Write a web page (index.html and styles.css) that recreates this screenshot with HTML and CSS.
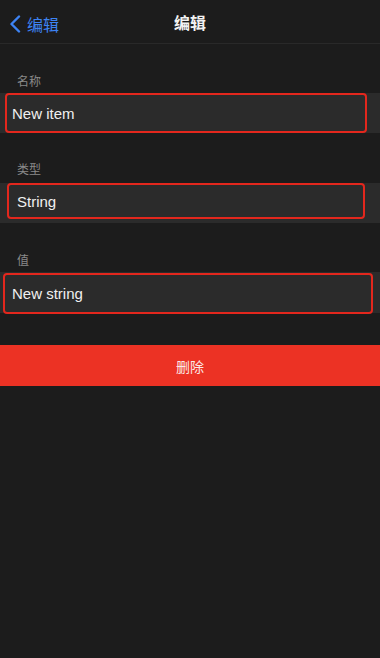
FILE: index.html
```html
<!DOCTYPE html>
<html lang="zh">
<head>
<meta charset="UTF-8">
<meta name="viewport" content="width=device-width, initial-scale=1.0">
<title>编辑</title>
<link rel="stylesheet" href="styles.css">
</head>
<body>
<div id="page">
    <header class="nav-bar">
        <a class="back">
            <svg width="12" height="18" viewBox="0 0 12 18"><path d="M10 1.5 L2.5 9 L10 16.5" fill="none" stroke="#3d83f3" stroke-width="2.4" stroke-linecap="round" stroke-linejoin="round"/></svg>
            <span>编辑</span>
        </a>
        <h1 class="title">编辑</h1>
    </header>

    <section class="group group-name">
        <div class="label">名称</div>
        <div class="row">
            <div class="mark mark-name">New item</div>
        </div>
    </section>

    <section class="group group-type">
        <div class="label">类型</div>
        <div class="row">
            <div class="mark mark-type">String</div>
        </div>
    </section>

    <section class="group group-value">
        <div class="label">值</div>
        <div class="row row-value">
            <div class="mark mark-value">New string</div>
        </div>
    </section>

    <button class="delete">删除</button>
</div>
</body>
</html>
```

FILE: styles.css
```css
html, body {
    margin: 0;
    padding: 0;
    background: #1c1c1c;
}
#page {
    width: 380px;
    min-height: 658px;
    font-family: "Liberation Sans", "Noto Sans CJK SC", sans-serif;
    color: #fff;
}
.nav-bar {
    height: 43px;
    border-bottom: 1px solid #292929;
    display: flex;
    align-items: center;
    justify-content: center;
    position: relative;
}
.back {
    position: absolute;
    left: 9px;
    top: 12px;
    display: flex;
    align-items: center;
    gap: 6px;
    color: #3d83f3;
    font-size: 16px;
}
.back svg {
    display: block;
}
.title {
    margin: 0;
    font-size: 16px;
    font-weight: bold;
    color: #f2f2f2;
}
.group {
    display: flex;
    flex-direction: column;
}
.label {
    padding-left: 17px;
    font-size: 12px;
    line-height: 16px;
    color: #8a8a8a;
    margin-bottom: 3px;
}
.group-name {
    padding-top: 30px;
}
.group-type {
    padding-top: 29px;
}
.group-value {
    padding-top: 30px;
}
.group-type .label {
    margin-bottom: 5px;
}
.row {
    background: #2b2b2b;
    height: 40px;
    display: flex;
    align-items: flex-start;
}
.row-value {
    height: 41px;
}
.mark {
    box-sizing: border-box;
    border: 2px solid #e3271d;
    border-radius: 4px;
    display: flex;
    align-items: center;
    font-size: 15px;
    color: #f0f0f0;
}
.mark-name {
    margin-left: 5px;
    width: 362px;
    height: 40px;
    padding-left: 5px;
}
.mark-type {
    margin-left: 7px;
    width: 358px;
    height: 36px;
    padding-left: 8px;
}
.mark-value {
    margin-left: 3px;
    width: 370px;
    height: 41px;
    padding-left: 7px;
    margin-top: 1px;
}
.delete {
    display: block;
    width: 380px;
    height: 41px;
    margin-top: 32px;
    border: none;
    background: #ec3224;
    color: #fbe9e7;
    font-family: "Liberation Sans", "Noto Sans CJK SC", sans-serif;
    font-size: 14px;
    padding: 0;
}
```
